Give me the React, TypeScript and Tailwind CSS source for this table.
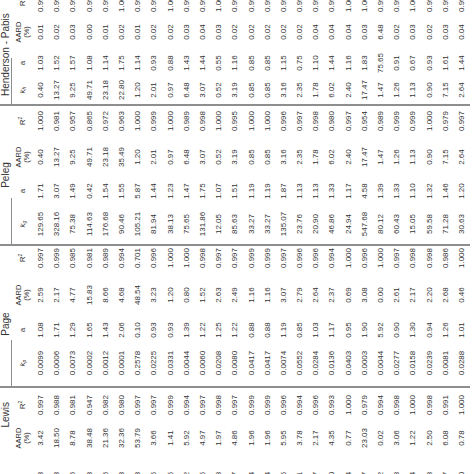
import type { ReactNode } from "react";

const lewisK = [3, 3, 6, 3, 6, 3, 3, 5, 5, 2, 5, 8, 7, 4, 4, 5, 1, 7, 0, 4, 7, 2, 8, 4, 8, 7, 0].map((d) => `0.012${d}`);
const lewisAARD = ["3.42", "18.50", "8.78", "38.48", "21.36", "32.36", "53.79", "3.66", "1.41", "5.92", "4.97", "1.97", "4.86", "1.96", "1.96", "5.95", "3.78", "2.17", "4.35", "0.77", "23.03", "0.02", "3.06", "1.22", "2.50", "6.08", "0.78"];
const lewisR2 = ["0.997", "0.988", "0.981", "0.947", "0.982", "0.980", "0.997", "0.997", "0.999", "0.994", "0.997", "0.998", "0.997", "0.999", "0.999", "0.996", "0.994", "0.996", "0.993", "1.000", "0.979", "0.994", "0.998", "1.000", "0.998", "0.991", "1.000"];
const pageK = ["0.0099", "0.0006", "0.0073", "0.0002", "0.0012", "0.0001", "0.2578", "0.0225", "0.0331", "0.0044", "0.0060", "0.0208", "0.0080", "0.0417", "0.0417", "0.0074", "0.0552", "0.0284", "0.0136", "0.0403", "0.0003", "0.0044", "0.0277", "0.0158", "0.0239", "0.0081", "0.0288"];
const pageA = ["1.08", "1.71", "1.29", "1.65", "1.43", "2.06", "0.10", "0.93", "0.93", "1.39", "1.22", "1.25", "1.22", "0.88", "0.88", "1.19", "0.85", "1.03", "1.17", "0.95", "1.90", "5.92", "0.90", "1.30", "0.94", "1.26", "1.01"];
const pageAARD = ["2.59", "2.17", "4.77", "15.83", "8.66", "4.68", "48.54", "3.23", "1.20", "0.80", "1.52", "2.63", "2.49", "1.16", "1.16", "3.07", "2.79", "2.64", "2.37", "0.69", "3.08", "0.00", "2.61", "2.17", "2.20", "2.68", "0.46"];
const pageR2 = ["0.997", "0.999", "0.985", "0.981", "0.989", "0.994", "0.701", "0.996", "1.000", "1.000", "0.998", "0.997", "0.997", "0.999", "0.999", "0.997", "0.996", "0.996", "0.994", "1.000", "0.996", "1.000", "0.997", "0.998", "0.998", "0.986", "1.000"];
const pelegK = ["129.65", "328.16", "75.38", "114.63", "176.68", "90.46", "105.21", "81.94", "38.13", "75.65", "131.86", "12.05", "85.63", "33.27", "33.27", "135.07", "23.76", "20.90", "46.86", "24.94", "547.68", "80.12", "60.43", "15.05", "59.58", "71.28", "30.63"];
const pelegA = ["1.71", "3.07", "1.49", "0.42", "1.54", "1.55", "5.87", "1.44", "1.23", "1.47", "1.75", "1.07", "1.51", "1.19", "1.19", "1.87", "1.13", "1.13", "1.33", "1.17", "4.58", "1.39", "1.33", "1.10", "1.32", "1.46", "1.20"];
const pelegAARD = ["0.40", "13.27", "9.25", "49.71", "23.18", "35.49", "1.20", "2.01", "0.97", "6.48", "3.07", "0.52", "3.19", "0.85", "0.85", "3.16", "2.35", "1.78", "6.02", "2.40", "17.47", "1.47", "1.26", "1.13", "0.90", "7.15", "2.64"];
const pelegR2 = ["1.000", "0.981", "0.957", "0.865", "0.972", "0.963", "1.000", "0.999", "1.000", "0.989", "0.998", "1.000", "0.995", "1.000", "1.000", "0.996", "0.997", "0.998", "0.980", "0.997", "0.954", "0.989", "0.999", "0.999", "1.000", "0.979", "0.997"];
const hendK = ["0.40", "13.27", "9.25", "49.71", "23.18", "22.80", "1.20", "2.01", "0.97", "6.48", "3.07", "0.52", "3.19", "0.85", "0.85", "3.16", "2.35", "1.78", "6.02", "2.40", "17.47", "1.47", "1.26", "1.13", "0.90", "7.15", "2.64"];
const hendA = ["1.03", "1.52", "1.57", "1.08", "1.14", "1.75", "1.14", "0.93", "0.88", "1.43", "1.44", "0.55", "1.16", "0.85", "0.85", "1.15", "0.75", "1.10", "1.44", "1.16", "1.83", "75.65", "0.91", "0.67", "0.93", "1.61", "1.44"];
const hendAARD = ["0.01", "0.02", "0.03", "0.00", "0.01", "0.02", "0.01", "0.02", "0.02", "0.03", "0.04", "0.03", "0.02", "0.02", "0.02", "0.02", "0.02", "0.04", "0.04", "0.04", "0.03", "6.48", "0.02", "0.03", "0.02", "0.03", "0.04"];
const hendR2 = ["0.995", "0.996", "0.993", "0.998", "0.994", "1.000", "0.997", "0.996", "1.000", "0.995", "0.997", "1.000", "0.994", "0.996", "0.998", "0.995", "0.993", "0.996", "0.994", "1.000", "1.000", "0.992", "0.996", "1.000", "0.997", "0.995", "0.998"];

const K = ({ s }: { s: string }) => (
  <span>
    <span className="italic">k</span>
    <sub className="text-[5px] italic">{s}</sub>
  </span>
);
const R2 = () => (
  <span>
    R<sup className="text-[5px]">2</sup>
  </span>
);
const Aard = () => (
  <span className="flex flex-col items-center text-[7.5px] leading-[8px]">
    <span>AARD</span>
    <span>(%)</span>
  </span>
);

type Col = { w: string; head: ReactNode; data: string[] };
type Group = { name: string; w: string; label: string; rule: boolean; cols: Col[] };

const groups: Group[] = [
  {
    name: "Lewis",
    w: "w-[126px]",
    label: "justify-end pr-[14px]",
    rule: false,
    cols: [
      { w: "w-[60px]", head: <K s="L" />, data: lewisK },
      { w: "w-[32px]", head: <Aard />, data: lewisAARD },
      { w: "w-[34px]", head: <R2 />, data: lewisR2 },
    ],
  },
  {
    name: "Page",
    w: "w-[140px]",
    label: "justify-center pr-[16px]",
    rule: true,
    cols: [
      { w: "w-[46px]", head: <K s="p" />, data: pageK },
      { w: "w-[20px]", head: "a", data: pageA },
      { w: "w-[50px]", head: <Aard />, data: pageAARD },
      { w: "w-[24px]", head: <R2 />, data: pageR2 },
    ],
  },
  {
    name: "Peleg",
    w: "w-[138px]",
    label: "justify-center",
    rule: true,
    cols: [
      { w: "w-[40px]", head: <K s="g" />, data: pelegK },
      { w: "w-[26px]", head: "a", data: pelegA },
      { w: "w-[42px]", head: <Aard />, data: pelegAARD },
      { w: "w-[30px]", head: <R2 />, data: pelegR2 },
    ],
  },
  {
    name: "Henderson - Pabis",
    w: "w-[114px]",
    label: "justify-start pl-[8px]",
    rule: true,
    cols: [
      { w: "w-[28px]", head: <K s="h" />, data: hendK },
      { w: "w-[26px]", head: "a", data: hendA },
      { w: "w-[36px]", head: <Aard />, data: hendAARD },
      { w: "w-[24px]", head: <R2 />, data: hendR2 },
    ],
  },
];

const Sep = () => <div className="w-[2px] shrink-0 self-stretch bg-[#8e8e8e]" />;

function Row({ h, cell }: { h: string; cell: (c: Col) => ReactNode }) {
  return (
    <div className={`flex ${h}`}>
      {groups.map((g, gi) => (
        <div key={g.name} className="flex">
          {gi > 0 && <Sep />}
          {g.cols.map((c, ci) => (
            <div key={ci} className={`flex shrink-0 items-center justify-center whitespace-nowrap ${c.w}`}>
              {cell(c)}
            </div>
          ))}
        </div>
      ))}
    </div>
  );
}

export default function App() {
  return (
    <div className="relative h-[474px] w-[474px] overflow-hidden bg-white">
      <div className="w-[524px] origin-top-left [transform:translateY(514px)_rotate(-90deg)] font-['Liberation_Sans',Arial,sans-serif] text-[8px] leading-none text-[#333]">
        {/* group header */}
        <div className="flex h-[12px]">
          {groups.map((g, gi) => (
            <div key={g.name} className="flex">
              {gi > 0 && <Sep />}
              <div className={`flex shrink-0 flex-col ${g.w}`}>
                <div className={`flex flex-1 items-center whitespace-nowrap text-[10px] ${g.label}`}>
                  {g.name}
                </div>
                {g.rule && <div className="h-px w-[46px] bg-[#8e8e8e]" />}
              </div>
            </div>
          ))}
        </div>
        {/* sub header */}
        <Row h="h-[21px]" cell={(c) => c.head} />
        {/* data */}
        {lewisAARD.map((_, ri) => (
          <Row key={ri} h="h-[16.2px]" cell={(c) => c.data[ri]} />
        ))}
      </div>
    </div>
  );
}
